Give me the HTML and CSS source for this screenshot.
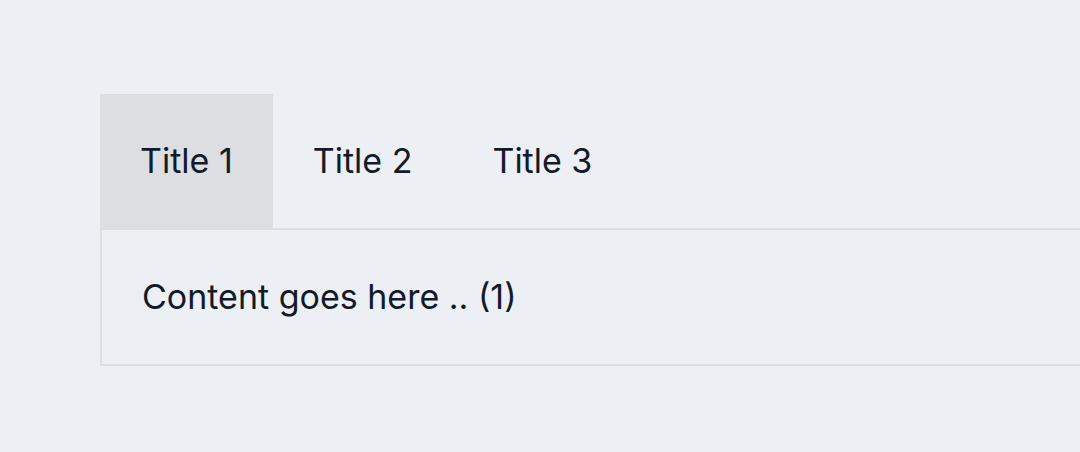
FILE: index.html
```html
<!DOCTYPE html>
<html>
<head>
<meta charset="utf-8">
<link rel="stylesheet" href="styles.css">
</head>
<body>
<div class="tabs">
  <div class="tab-list">
    <div class="tab active">Title 1</div>
    <div class="tab">Title 2</div>
    <div class="tab">Title 3</div>
  </div>
  <div class="panel">Content goes here .. (1)</div>
</div>
</body>
</html>
```
FILE: styles.css
```css
*, *::before, *::after {
  box-sizing: border-box;
}
html, body {
  margin: 0;
  padding: 0;
  background: #eceff4;
}
body {
  font-family: Inter, "Noto Sans", sans-serif;
  color: #131a28;
  padding: 94px 0 0 100px;
  width: 1080px;
  height: 452px;
  overflow: hidden;
}
.tabs {
  width: 100%;
}
.tab-list {
  display: flex;
}
.tab {
  font-size: 34px;
  line-height: 54px;
  padding: 40px 40px;
}
.tab.active {
  background: #dcdee1;
}
.panel {
  border: 2px solid #dcdee2;
  border-right: none;
  font-size: 34px;
  line-height: 54px;
  padding: 40px 40px;
}
```
